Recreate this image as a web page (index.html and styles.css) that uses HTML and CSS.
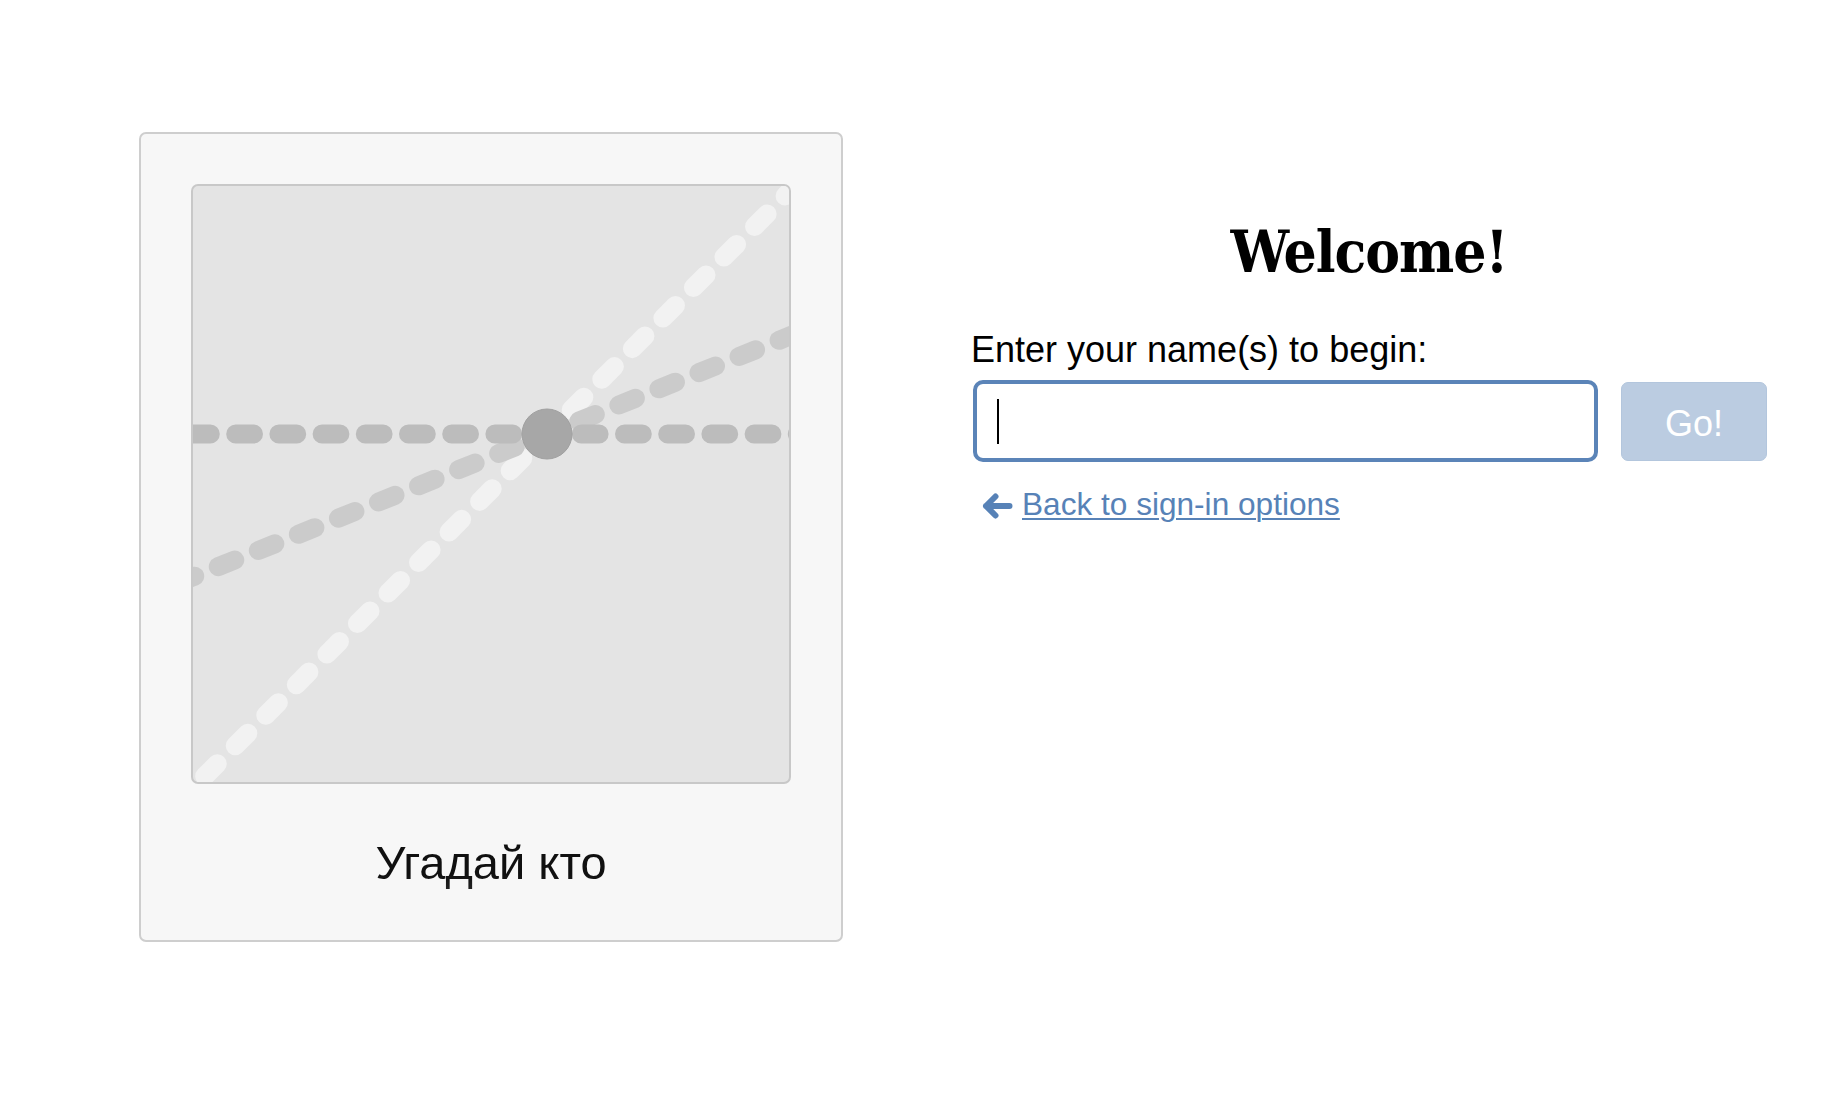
FILE: index.html
```html
<!DOCTYPE html>
<html lang="en">
<head>
<meta charset="utf-8">
<title>Welcome</title>
<link rel="stylesheet" href="styles.css">
</head>
<body>
<main class="page">
  <section class="game-card">
    <div class="game-art">
      <svg class="art-svg" viewBox="2 2 596 596" width="596" height="596" aria-hidden="true">
        <g fill="none" stroke-linecap="round" stroke-width="19" stroke-dasharray="17.8 25.4" stroke-dashoffset="8.9">
          <line x1="356" y1="250" x2="724" y2="-118" stroke="#f2f2f2"/>
          <line x1="356" y1="250" x2="-12" y2="618" stroke="#f2f2f2"/>
          <line x1="356" y1="250" x2="750" y2="91" stroke="#cbcbcb"/>
          <line x1="356" y1="250" x2="-38" y2="409" stroke="#cbcbcb"/>
          <line x1="356" y1="250" x2="640" y2="250" stroke="#bcbcbc"/>
          <line x1="356" y1="250" x2="-40" y2="250" stroke="#bcbcbc"/>
        </g>
        <circle cx="356" cy="250" r="25" fill="#a7a7a7" stroke="#a0a0a0" stroke-width="1"/>
      </svg>
    </div>
    <div class="game-title">Угадай кто</div>
  </section>

  <section class="signin">
    <h1 class="welcome">Welcome!</h1>
    <label class="name-label" for="names">Enter your name(s) to begin:</label>
    <div class="name-row">
      <div class="name-field">
        <input id="names" class="name-input" type="text">
        <span class="caret"></span>
      </div>
      <button class="go-btn" type="button">Go!</button>
    </div>
    <a class="back-link" href="#">
      <svg class="back-arrow" viewBox="0 0 32 28" width="32" height="28" aria-hidden="true">
        <path d="M28.5 14 H5 M14.5 4.5 L5 14 L14.5 23.5" fill="none" stroke="#5782b7" stroke-width="6" stroke-linecap="round" stroke-linejoin="round"/>
      </svg>
      <span class="back-text">Back to sign-in options</span>
    </a>
  </section>
</main>
</body>
</html>
```
FILE: styles.css
```css
html, body {
  margin: 0;
  padding: 0;
  background: #ffffff;
}

body {
  font-family: "Liberation Sans", Arial, Helvetica, sans-serif;
  color: #000;
}

.page {
  display: flex;
  align-items: flex-start;
  gap: 122px;
  padding: 132px 0 0 139px;
}

/* ---------- game card ---------- */
.game-card {
  width: 704px;
  box-sizing: border-box;
  border: 2px solid #cecece;
  border-radius: 7px;
  background: #f7f7f7;
  padding: 50px 50px 0;
}

.game-art {
  width: 600px;
  height: 600px;
  box-sizing: border-box;
  border: 2px solid #c8c8c8;
  border-radius: 7px;
  background: #e4e4e4;
  overflow: hidden;
}

.art-svg {
  display: block;
}

.game-title {
  margin-top: 54px;
  padding-bottom: 52px;
  font-size: 47px;
  line-height: 50px;
  text-align: center;
  color: #222;
  background: linear-gradient(#101010 35%, #5c5c5c 100%);
  -webkit-background-clip: text;
  background-clip: text;
  -webkit-text-fill-color: transparent;
}

/* ---------- sign in ---------- */
.signin {
  width: 808px;
  display: flex;
  flex-direction: column;
  padding-top: 88px;
}

.welcome {
  margin: 0;
  font-family: "DejaVu Serif Condensed", "DejaVu Serif", serif;
  font-stretch: condensed;
  font-weight: bold;
  font-size: 58px;
  line-height: 64px;
  letter-spacing: -1px;
  text-align: center;
  color: #000;
}

.name-label {
  display: block;
  margin-top: 46px;
  margin-left: 6px;
  font-size: 36px;
  line-height: 40px;
  color: #000;
}

.name-row {
  display: flex;
  align-items: center;
  gap: 23px;
  margin-top: 10px;
  padding-left: 8px;
}

.name-field {
  position: relative;
}

.name-input {
  display: block;
  width: 625px;
  height: 82px;
  box-sizing: border-box;
  margin: 0;
  padding: 0 22px;
  border: 4px solid #5b84b8;
  border-radius: 10px;
  outline: none;
  background: #fff;
  font-family: "Liberation Sans", Arial, sans-serif;
  font-size: 36px;
  color: #000;
}

.caret {
  position: absolute;
  left: 24px;
  top: 19px;
  width: 2px;
  height: 45px;
  background: #000;
}

.go-btn {
  width: 146px;
  height: 79px;
  box-sizing: border-box;
  margin: 0;
  padding: 5px 0 0;
  border: 1px solid #b3c6dd;
  border-radius: 7px;
  background: #bbcce1;
  color: #ffffff;
  font-family: "Liberation Sans", Arial, sans-serif;
  font-size: 36px;
  cursor: pointer;
}

.back-link {
  display: inline-flex;
  align-self: flex-start;
  align-items: center;
  gap: 9px;
  margin-top: 24px;
  margin-left: 16px;
  font-size: 31.6px;
  line-height: 36px;
  color: #5782b7;
  text-decoration: none;
}

.back-arrow {
  display: block;
  margin-top: 3px;
}

.back-text {
  text-decoration: underline;
  text-decoration-thickness: 2px;
  text-underline-offset: 3px;
}
```
